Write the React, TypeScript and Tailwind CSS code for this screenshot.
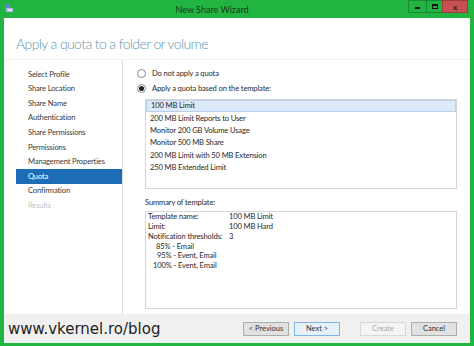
import React from "react";

const navItems = [
  "Select Profile",
  "Share Location",
  "Share Name",
  "Authentication",
  "Share Permissions",
  "Permissions",
  "Management Properties",
  "Quota",
  "Confirmation",
  "Results",
];

const templates = [
  "100 MB Limit",
  "200 MB Limit Reports to User",
  "Monitor 200 GB Volume Usage",
  "Monitor 500 MB Share",
  "200 MB Limit with 50 MB Extension",
  "250 MB Extended Limit",
];

function Radio({ checked }: { checked?: boolean }) {
  return (
    <span className="w-[9px] h-[9px] rounded-full border border-[#8a8a8a] bg-white flex items-center justify-center shrink-0">
      {checked && <span className="w-[5px] h-[5px] rounded-full bg-[#222]" />}
    </span>
  );
}

function Btn({ label, focused, disabled }: { label: string; focused?: boolean; disabled?: boolean }) {
  return (
    <div
      className={
        "w-[46px] h-[14px] flex items-center justify-center text-[7.5px] border " +
        (focused
          ? "border-[#7eb4ea] bg-[#e5f1fb] text-[#333]"
          : disabled
          ? "border-[#d8d8d8] bg-[#f4f4f4] text-[#a8a8a8]"
          : "border-[#adadad] bg-[#e1e1e1] text-[#333]")
      }
    >
      {label}
    </div>
  );
}

export default function App() {
  return (
    <div
      className="w-[474px] h-[346px] bg-[#21b441] flex flex-col overflow-hidden"
      style={{ fontFamily: 'Lato, "Open Sans", sans-serif' }}
    >
      {/* Title bar */}
      <div className="h-[18px] flex items-start relative">
        <div className="w-[16px] pl-[5px] pt-[4px]">
          <svg width="9" height="9" viewBox="0 0 9 9">
            <rect x="0" y="0" width="5" height="5" fill="#6a7fd8" />
            <rect x="1" y="4" width="7" height="4" fill="#a9b8f0" />
            <rect x="3" y="5" width="4" height="2" fill="#dfe4ff" />
          </svg>
        </div>
        <div className="flex-1 text-center text-[9px] text-[#1d3b20] pt-[3px]">New Share Wizard</div>
        <div className="flex pr-[6px]">
          <div className="w-[19px] h-[13px] border border-[#178a33] flex items-center justify-center">
            <span className="w-[5px] h-[2px] bg-[#111] mt-[3px]" />
          </div>
          <div className="w-[15px] h-[13px] border-y border-[#178a33] flex items-center justify-center">
            <span className="w-[6px] h-[5px] border border-[#111] border-t-2" />
          </div>
          <div className="w-[26px] h-[13px] bg-[#c75050] border border-[#9c3c3c] flex items-center justify-center text-[8px] font-bold text-[#1a1a1a] leading-none">
            x
          </div>
        </div>
      </div>

      {/* Window body */}
      <div className="flex-1 mx-[4px] mb-[3px] bg-white flex flex-col">
        <div className="h-[42px] flex items-center pl-[12px] pt-[9px] border-b border-[#f0f0f0]">
          <span className="text-[14px] font-light text-[#5f96ae] tracking-[-0.6px]">Apply a quota to a folder or volume</span>
        </div>

        <div className="flex-1 flex text-[7.6px] tracking-[-0.15px]">
          {/* Nav */}
          <div className="w-[119px] border-r border-[#dcdcdc] pt-[7px] pl-[12px]">
            {navItems.map((n) => {
              const sel = n === "Quota";
              const dis = n === "Results";
              return (
                <div
                  key={n}
                  className={
                    "h-[14.6px] flex items-center pl-[12px] whitespace-nowrap " +
                    (sel ? "bg-[#1c6db5] text-white" : dis ? "text-[#c4c4c4]" : "text-[#3a3a3a]")
                  }
                >
                  {n}
                </div>
              );
            })}
          </div>

          {/* Content */}
          <div className="flex-1 pl-[13px] pr-[13px] pt-[6px] flex flex-col text-[#2a2a2a]">
            <div className="flex items-center gap-[6px] h-[15px] pl-[1px]">
              <Radio />
              <span>Do not apply a quota</span>
            </div>
            <div className="flex items-center gap-[6px] h-[15px] pl-[1px]">
              <Radio checked />
              <span>Apply a quota based on the template:</span>
            </div>
            <div className="ml-[9px] mt-[3px] h-[90px] border border-[#d6d6d6] flex flex-col">
              {templates.map((t, i) => (
                <div
                  key={t}
                  className={
                    "h-[12.3px] flex items-center pl-[4px] whitespace-nowrap " +
                    (i === 0 ? "bg-[#dde9f8] border border-[#b6d0ee] pl-[3px]" : "")
                  }
                >
                  {t}
                </div>
              ))}
            </div>
            <div className="ml-[9px] mt-[8px] h-[12px] flex items-center">Summary of template:</div>
            <div className="ml-[9px] mt-[2px] h-[98px] border border-[#d6d6d6] pl-[2px] flex flex-col">
              {[
                ["Template name:", "100 MB Limit"],
                ["Limit:", "100 MB Hard"],
                ["Notification thresholds:", "3"],
              ].map(([a, b]) => (
                <div key={a} className="h-[9.8px] flex items-center whitespace-nowrap">
                  <span className="w-[81px] shrink-0">{a}</span>
                  <span>{b}</span>
                </div>
              ))}
              <div className="h-[9.8px] flex items-center pl-[8px] whitespace-nowrap">85% - Email</div>
              <div className="h-[9.8px] flex items-center pl-[9px] whitespace-nowrap">95% - Event, Email</div>
              <div className="h-[9.8px] flex items-center pl-[5px] whitespace-nowrap">100% - Event, Email</div>
            </div>
          </div>
        </div>

        {/* Footer */}
        <div className="h-[29px] bg-[#f0f0f0] flex items-center">
          <div
            className="pl-[4px] text-[15px] text-[#1e1e1e] flex-1 leading-none pt-[2px]"
            style={{ fontFamily: '"DejaVu Sans", sans-serif' }}
          >
            www.vkernel.ro/blog
          </div>
          <div className="flex items-center pr-[13px]">
            <Btn label="< Previous" />
            <div className="w-[5px]" />
            <Btn label="Next >" focused />
            <div className="w-[20px]" />
            <Btn label="Create" disabled />
            <div className="w-[5px]" />
            <Btn label="Cancel" />
          </div>
        </div>
      </div>
    </div>
  );
}
